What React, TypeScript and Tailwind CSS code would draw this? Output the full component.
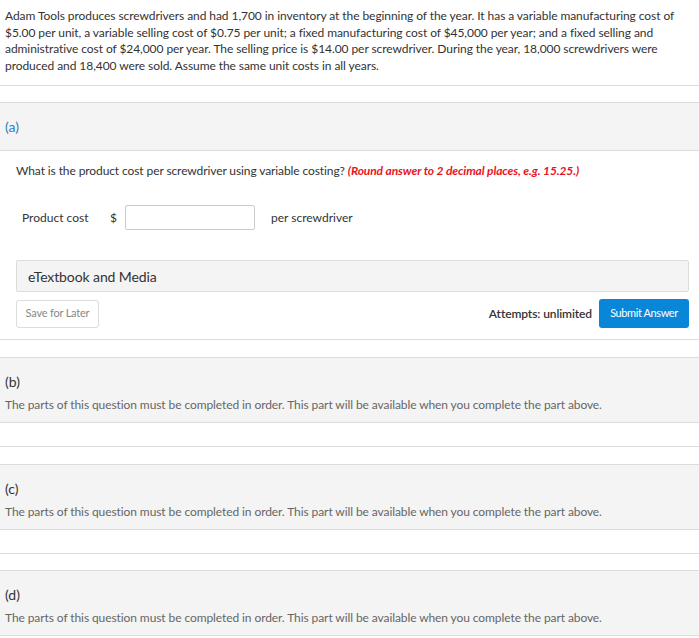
import React from "react";

function LockedPart({ label, gap }: { label: string; gap: string }) {
  return (
    <div>
      <div className={gap} />
      <div className="border-y border-[#dcdcdc] bg-[#f4f4f4] h-[66px] pl-[5px] pt-[14px]">
        <div className="text-[14px] leading-[20px] text-[#333]">{label}</div>
        <div className="mt-[5px] text-[12px] leading-[16px] text-[#666] tracking-[-0.09px]">
          The parts of this question must be completed in order. This part will be available when you complete the part above.
        </div>
      </div>
      <div className="h-[24px] border-b border-[#dcdcdc]" />
    </div>
  );
}

export default function App() {
  return (
    <div className="w-[699px] bg-white" style={{ fontFamily: "Lato, 'Open Sans', sans-serif" }}>
      <div className="h-[86px] border-b border-[#dcdcdc] px-[5px] pt-[8px] text-[12px] leading-[16.5px] text-[#333] tracking-[-0.07px]">
        Adam Tools produces screwdrivers and had 1,700 in inventory at the beginning of the year. It has a variable manufacturing cost of $5.00 per unit, a variable selling cost of $0.75 per unit; a fixed manufacturing cost of $45,000 per year; and a fixed selling and administrative cost of $24,000 per year. The selling price is $14.00 per screwdriver. During the year, 18,000 screwdrivers were produced and 18,400 were sold. Assume the same unit costs in all years.
      </div>
      <div className="h-[16px]" />
      <div className="h-[49px] border-y border-[#dcdcdc] bg-[#f4f4f4] pl-[5px] flex items-center">
        <span className="text-[14px] text-[#2a7fc1]">(a)</span>
      </div>
      <div className="h-[189px] border-b border-[#dcdcdc] pl-[16px] pr-[10px] pt-[12px]">
        <div className="text-[12px] leading-[16px] text-[#333] tracking-[-0.1px]">
          What is the product cost per screwdriver using variable costing?{" "}
          <span className="font-bold italic text-[#e8141c]">(Round answer to 2 decimal places, e.g. 15.25.)</span>
        </div>
        <div className="mt-[26px] flex items-center h-[25px] text-[12px] text-[#333]">
          <span className="ml-[6px] w-[88px]">Product cost</span>
          <span className="w-[15px]">$</span>
          <div className="w-[130px] h-[25px] border border-[#ccc] bg-white rounded-[2px]" />
          <span className="ml-[16px]">per screwdriver</span>
        </div>
        <div className="mt-[30px] h-[32px] border border-[#dcdcdc] bg-[#f4f4f4] rounded-[2px] flex items-center pl-[11px] text-[14px] text-[#333] tracking-[-0.1px]">
          eTextbook and Media
        </div>
        <div className="mt-[7px] flex items-center justify-between">
          <div className="h-[28px] w-[83px] border border-[#dcdcdc] rounded-[3px] flex items-center justify-center text-[11px] text-[#888] tracking-[-0.2px]">
            Save for Later
          </div>
          <div className="flex items-center">
            <span className="text-[12px] font-semibold text-[#333] mr-[7px] tracking-[-0.1px]">Attempts: unlimited</span>
            <div className="h-[29px] w-[90px] bg-[#0a86d8] rounded-[3px] flex items-center justify-center text-[11px] text-white tracking-[-0.4px]">
              Submit Answer
            </div>
          </div>
        </div>
      </div>
      <LockedPart label="(b)" gap="h-[17px]" />
      <LockedPart label="(c)" gap="h-[17px]" />
      <LockedPart label="(d)" gap="h-[16px]" />
    </div>
  );
}
